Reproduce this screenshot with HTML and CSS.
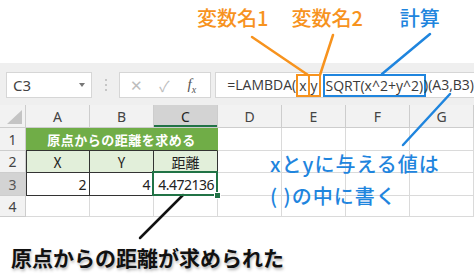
FILE: index.html
```html
<!DOCTYPE html>
<html lang="ja">
<head>
  <meta charset="UTF-8" />
  <title>LAMBDA 関数の例</title>
  <link rel="stylesheet" href="styles.css">
</head>
<body>
  <div class="page">
    <div class="labels">
      <span class="label label-1">変数名1</span>
      <span class="label label-2">変数名2</span>
      <span class="label label-3">計算</span>
    </div>

    <div class="toolbar">
      <div class="namebox"><span>C3</span><span class="caret"></span></div>
      <div class="grip">
        <svg width="4" height="14" viewBox="0 0 4 14"><circle cx="2" cy="2" r="1" /><circle cx="2" cy="7" r="1" /><circle cx="2" cy="12" r="1" /></svg>
      </div>
      <div class="fxbox">
        <span class="btn">✕</span>
        <span class="btn">✓</span>
        <span class="fx"><i>f</i><sub>x</sub></span>
      </div>
      <div class="formula">=LAMBDA(<span class="box box-o">x</span><span class="box box-o box-join">y</span><span class="box box-b">SQRT(x^2+y^2)</span>)(A3,B3)</div>
    </div>

    <div class="sheet">
      <div class="cell head corner"><span class="tri"></span></div>
      <div class="cell head">A</div>
      <div class="cell head">B</div>
      <div class="cell head head-sel">C</div>
      <div class="cell head">D</div>
      <div class="cell head">E</div>
      <div class="cell head">F</div>
      <div class="cell head">G</div>

      <div class="cell rowhead">1</div>
      <div class="cell title">原点からの距離を求める</div>
      <div class="cell"></div><div class="cell"></div><div class="cell"></div><div class="cell"></div>

      <div class="cell rowhead">2</div>
      <div class="cell sub edge-l">X</div>
      <div class="cell sub">Y</div>
      <div class="cell sub">距離</div>
      <div class="cell"></div><div class="cell"></div><div class="cell"></div><div class="cell"></div>

      <div class="cell rowhead rowhead-sel">3</div>
      <div class="cell num boxed edge-l">2</div>
      <div class="cell num boxed">4</div>
      <div class="cell num boxed sel">4.472136</div>
      <div class="cell"></div><div class="cell"></div><div class="cell"></div><div class="cell"></div>

      <div class="cell rowhead">4</div>
      <div class="cell"></div><div class="cell"></div><div class="cell"></div><div class="cell"></div>
      <div class="cell"></div><div class="cell"></div><div class="cell"></div>
    </div>

    <p class="caption">原点からの距離が求められた</p>

    <p class="note">xとyに与える値は<br>( )の中に書く</p>

    <svg class="leaders" width="474" height="274" viewBox="0 0 474 274">
      <line x1="252" y1="37" x2="308" y2="75" class="o" />
      <line x1="333" y1="35" x2="320" y2="75" class="o" />
      <line x1="430" y1="34" x2="382" y2="74" class="b" />
      <line x1="450" y1="94" x2="403" y2="145" class="b" />
      <line x1="183" y1="195" x2="140" y2="238" class="k" />
    </svg>
  </div>
</body>
</html>
```

FILE: styles.css
```css
:root {
  --orange: #f7931e;
  --blue: #1f85de;
  --xl-green: #217346;
  --grid-line: #dadada;
  --head-bg: #f2f2f2;
  --jp: "Noto Sans CJK JP", sans-serif;
}

body {
  margin: 0;
  background: #fff;
  font-family: "Noto Sans", "Noto Sans CJK JP", sans-serif;
}

.page {
  position: relative;
  width: 474px;
  height: 274px;
  overflow: hidden;
}

/* callout labels above the formula bar */
.labels {
  height: 63px;
  box-sizing: border-box;
  padding-top: 6px;
  display: flex;
  font-family: var(--jp);
  font-size: 20px;
  line-height: 24px;
  font-weight: 500;
}

.label-1 { margin-left: 197px; color: var(--orange); }
.label-2 { margin-left: 23px; color: var(--orange); }
.label-3 { margin-left: 37px; color: var(--blue); }

/* formula bar */
.toolbar {
  height: 42px;
  box-sizing: border-box;
  padding-top: 9px;
  background: #efefef;
  display: flex;
  align-items: flex-start;
}

.namebox {
  margin-left: 6px;
  width: 89px;
  height: 26px;
  box-sizing: border-box;
  padding: 0 6px 0 6px;
  background: #fff;
  border: 1px solid #d6d6d6;
  display: flex;
  align-items: center;
  justify-content: space-between;
  font-size: 15px;
  color: #444;
}

.caret {
  width: 0;
  height: 0;
  border-left: 3.5px solid transparent;
  border-right: 3.5px solid transparent;
  border-top: 4px solid #777;
}

.grip {
  width: 28px;
  height: 26px;
  display: flex;
  align-items: center;
  justify-content: center;
  fill: #b8b8b8;
}

.fxbox {
  width: 95px;
  height: 26px;
  box-sizing: border-box;
  background: #fff;
  border: 1px solid #d6d6d6;
  display: flex;
  align-items: center;
  padding-left: 10px;
  gap: 16px;
  color: #bdbdbd;
  font-size: 15px;
}

.fx {
  margin-left: 2px;
  font-family: "Liberation Serif", serif;
  font-size: 15px;
  color: #555;
}

.fx sub { font-size: 10px; font-style: italic; }

.formula {
  margin-left: 4px;
  flex: 1;
  height: 26px;
  box-sizing: border-box;
  padding-left: 11px;
  background: #fff;
  border: 1px solid #d6d6d6;
  border-right: none;
  font-family: "Open Sans", sans-serif;
  font-size: 14px;
  line-height: 24px;
  color: #3a3a3a;
  white-space: nowrap;
}

.box {
  display: inline-block;
  height: 23px;
  box-sizing: border-box;
  line-height: 19px;
  vertical-align: top;
  margin-top: 1px;
  padding: 0 1px;
}

.box-o { border: 2px solid var(--orange); }
.box-join { margin-left: -2px; }
.box-b { border: 2px solid var(--blue); margin-left: 2px; margin-right: -2px; }

/* sheet */
.sheet {
  display: grid;
  grid-template-columns: 26px repeat(7, 64px);
  grid-template-rows: 23px 23px 22px 23px 21px;
  font-size: 14px;
  color: #222;
}

.cell {
  box-sizing: border-box;
  border-right: 1px solid var(--grid-line);
  border-bottom: 1px solid var(--grid-line);
  display: flex;
  align-items: center;
  justify-content: center;
  white-space: nowrap;
}

.head, .rowhead {
  background: var(--head-bg);
  color: #444;
  border-right-color: #cdcdcd;
  border-bottom-color: #cdcdcd;
}

.corner { align-items: flex-end; justify-content: flex-end; padding: 0 3px 3px 0; }

.tri {
  width: 0;
  height: 0;
  border-left: 15px solid transparent;
  border-bottom: 14px solid #c4c4c4;
}

.head-sel {
  background: #d3d3d3;
  color: #222;
  box-shadow: inset 0 -2px 0 var(--xl-green);
}

.rowhead-sel { background: #d3d3d3; color: #555; }

.title {
  grid-column: span 3;
  background: #70ad47;
  color: #fff;
  font-family: var(--jp);
  font-weight: 700;
  font-size: 13px;
  letter-spacing: 0.5px;
  border-right-color: #70ad47;
  border-bottom-color: #333;
}

.sub {
  background: #e2efda;
  font-family: var(--jp);
  font-size: 14px;
  border-right-color: #333;
  border-bottom-color: #333;
}

.boxed {
  border-right-color: #333;
  border-bottom-color: #333;
}

.edge-l { box-shadow: inset 1px 0 0 #333; }

.num {
  justify-content: flex-end;
  padding-right: 3px;
  font-size: 14px;
  letter-spacing: -0.5px;
}

.sel { position: relative; z-index: 1; }

.sel::after {
  content: "";
  position: absolute;
  left: -2px;
  top: -2px;
  right: -1px;
  bottom: -1px;
  border: 2px solid var(--xl-green);
}

.sel::before {
  content: "";
  position: absolute;
  right: -4px;
  bottom: -4px;
  width: 5px;
  height: 5px;
  background: var(--xl-green);
  border: 1px solid #fff;
  z-index: 2;
}

/* callouts */
.caption {
  margin: 0;
  padding: 28px 0 0 11px;
  font-family: var(--jp);
  font-weight: 700;
  font-size: 21px;
  line-height: 25px;
  color: #111;
  -webkit-text-stroke: 4px #fff;
  paint-order: stroke fill;
  text-shadow: 1px 2px 3px rgba(0, 0, 0, 0.3);
}

.note {
  position: absolute;
  left: 270px;
  top: 148px;
  margin: 0;
  font-family: var(--jp);
  font-weight: 500;
  font-size: 20px;
  line-height: 32px;
  letter-spacing: 1px;
  color: var(--blue);
}

.leaders {
  position: absolute;
  left: 0;
  top: 0;
  pointer-events: none;
}

.leaders line { stroke-width: 2.5; stroke-linecap: round; }
.leaders .o { stroke: var(--orange); }
.leaders .b { stroke: var(--blue); }
.leaders .k { stroke: #111; }
```
